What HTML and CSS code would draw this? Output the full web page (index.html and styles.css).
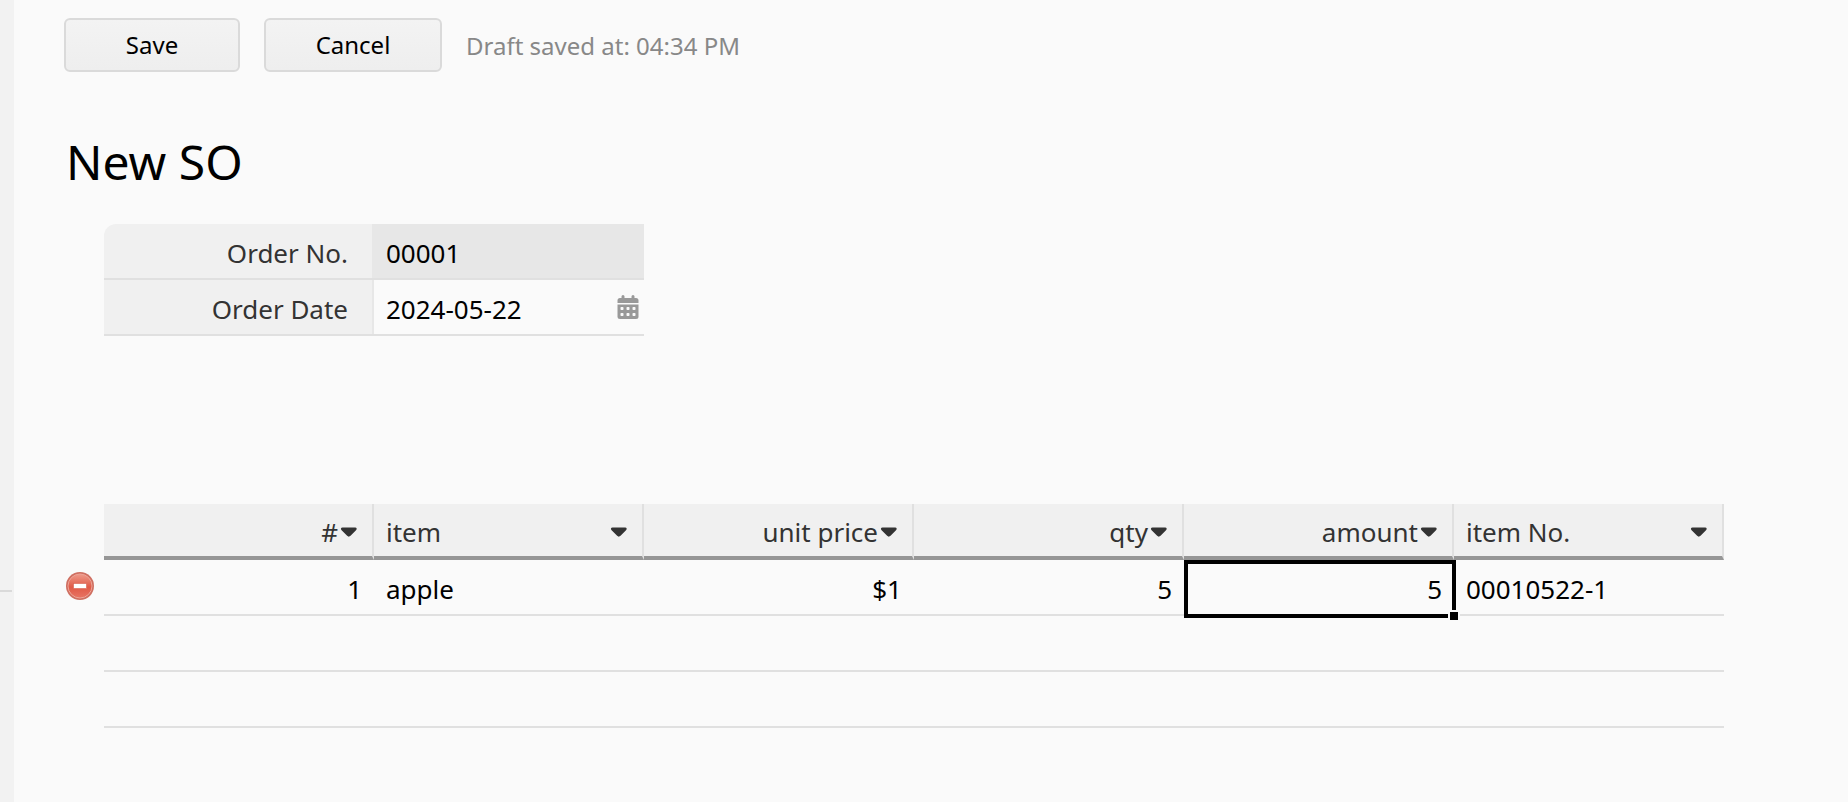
FILE: index.html
```html
<!DOCTYPE html>
<html lang="en">
<head>
    <meta charset="UTF-8">
    <meta name="viewport" content="width=device-width, initial-scale=1.0">
    <title>New SO</title>
    <link rel="stylesheet" href="styles.css">
</head>
<body>
    <svg class="sprite" aria-hidden="true">
        <symbol id="caret" viewBox="0 0 18 12">
            <path d="M2.5 1.500h12.6c1.700 0 2.200 1.600.9 2.700l-5.500 5.600c-1.200 1.100-2.200 1.100-3.400 0L1.600 4.200C.4 3.100.8 1.500 2.500 1.500z"/>
        </symbol>
    </svg>

    <div class="sidebar"></div>

    <main class="page">
        <div class="toolbar">
            <button type="button" class="btn btn-save">Save</button>
            <button type="button" class="btn btn-cancel">Cancel</button>
            <span class="draft-status">Draft saved at: 04:34 PM</span>
        </div>

        <h1>New SO</h1>

        <form class="order-form">
            <div class="form-row">
                <label for="order-no">Order No.</label>
                <div class="field readonly">
                    <input type="text" id="order-no" value="00001" readonly>
                </div>
            </div>
            <div class="form-row">
                <label for="order-date">Order Date</label>
                <div class="field">
                    <input type="text" id="order-date" value="2024-05-22">
                    <button type="button" class="date-btn" aria-label="Pick a date">
                        <svg viewBox="0 0 22 24" width="22" height="24">
                            <path fill="#999" d="M4.500 1.500a1.500 1.500 0 0 1 3 0V3h7V1.500a1.500 1.500 0 0 1 3 0V3H19a2.500 2.500 0 0 1 2.500 2.500V8h-21V5.500A2.500 2.500 0 0 1 3 3h1.500z"/>
                            <path fill="#999" d="M.5 9.500h21v12A2.500 2.500 0 0 1 19 24H3a2.500 2.500 0 0 1-2.500-2.500z"/>
                            <g fill="#fafafa">
                                <rect x="3.500" y="12" width="3" height="3" rx=".8"/>
                                <rect x="9.500" y="12" width="3" height="3" rx=".8"/>
                                <rect x="15.500" y="12" width="3" height="3" rx=".8"/>
                                <rect x="3.500" y="18" width="3" height="3" rx=".8"/>
                                <rect x="9.500" y="18" width="3" height="3" rx=".8"/>
                                <rect x="15.500" y="18" width="3" height="3" rx=".8"/>
                            </g>
                        </svg>
                    </button>
                </div>
            </div>
        </form>

        <div class="line-items">
            <div class="row-actions">
                <button type="button" class="remove-btn" aria-label="Remove row">
                    <svg viewBox="0 0 30 30" width="30" height="30">
                        <defs>
                            <linearGradient id="remove-fill" x1="0" y1="0" x2="0" y2="1">
                                <stop offset="0" stop-color="#ee9a8a"/>
                                <stop offset=".55" stop-color="#e05a47"/>
                                <stop offset="1" stop-color="#e87464"/>
                            </linearGradient>
                        </defs>
                        <circle cx="15" cy="15" r="14" fill="#cf6f61"/>
                        <circle cx="15" cy="15" r="12" fill="url(#remove-fill)" stroke="#eda396"/>
                        <rect x="8.500" y="12.500" width="13" height="5" fill="#fff" stroke="#d9604f" stroke-width=".6"/>
                    </svg>
                </button>
            </div>
            <table class="items">
                <thead>
                    <tr>
                        <th class="num"><div class="head"><span>#</span><button type="button" aria-label="# menu"><svg width="18" height="12"><use href="#caret"/></svg></button></div></th>
                        <th><div class="head"><span>item</span><button type="button" aria-label="item menu"><svg width="18" height="12"><use href="#caret"/></svg></button></div></th>
                        <th class="num"><div class="head"><span>unit price</span><button type="button" aria-label="unit price menu"><svg width="18" height="12"><use href="#caret"/></svg></button></div></th>
                        <th class="num"><div class="head"><span>qty</span><button type="button" aria-label="qty menu"><svg width="18" height="12"><use href="#caret"/></svg></button></div></th>
                        <th class="num"><div class="head"><span>amount</span><button type="button" aria-label="amount menu"><svg width="18" height="12"><use href="#caret"/></svg></button></div></th>
                        <th><div class="head"><span>item No.</span><button type="button" aria-label="item No. menu"><svg width="18" height="12"><use href="#caret"/></svg></button></div></th>
                    </tr>
                </thead>
                <tbody>
                    <tr>
                        <td class="num">1</td>
                        <td>apple</td>
                        <td class="num">$1</td>
                        <td class="num">5</td>
                        <td class="num selected">5</td>
                        <td>00010522-1</td>
                    </tr>
                    <tr><td colspan="6"></td></tr>
                    <tr><td colspan="6"></td></tr>
                </tbody>
            </table>
        </div>
    </main>
</body>
</html>
```
FILE: styles.css
```css
:root {
    --bg: #fafafa;
    --head-bg: #f0f0f0;
    --line: #e0e0e0;
    --label: #333;
}

*,
*::before,
*::after {
    margin: 0;
    padding: 0;
    box-sizing: border-box;
}

body {
    display: flex;
    min-height: 100vh;
    background: var(--bg);
    color: #000;
    font-family: 'Noto Sans', 'Open Sans', sans-serif;
    font-size: 26px;
    line-height: 36px;
}

button,
input {
    font: inherit;
    color: inherit;
    border: none;
    background: none;
}

button {
    cursor: pointer;
}

svg {
    display: block;
}

.sprite {
    display: none;
}

.sidebar {
    flex: 0 0 14px;
    background: #f2f2f2;
    padding-top: 590px;
}

.sidebar::before {
    content: '';
    display: block;
    width: 12px;
    height: 2px;
    background: #dadada;
}

.page {
    flex: 1;
    min-width: 0;
    padding: 18px 124px 24px 50px;
}

.toolbar {
    display: flex;
    align-items: center;
    gap: 24px;
    font-size: 24px;
}

.btn {
    height: 54px;
    border: 2px solid #dadada;
    border-radius: 6px;
    background: linear-gradient(#f3f3f3, #eee);
}

.btn-save {
    width: 176px;
}

.btn-cancel {
    width: 178px;
}

.draft-status {
    padding-top: 2px;
    color: #888;
}

h1 {
    margin-top: 56px;
    padding-left: 2px;
    font-size: 48px;
    font-weight: 400;
    line-height: 68px;
}

.order-form {
    max-width: 540px;
    margin: 28px 0 0 40px;
    border-top-left-radius: 12px;
    overflow: hidden;
}

.form-row {
    display: grid;
    grid-template-columns: repeat(2, minmax(0, 1fr));
    height: 56px;
    border-bottom: 2px solid var(--line);
}

.form-row label {
    padding: 11px 24px 0 0;
    border-right: 2px solid #e7e7e7;
    background: var(--head-bg);
    color: var(--label);
    text-align: right;
}

.field {
    display: flex;
    align-items: center;
    padding-right: 5px;
}

.field input {
    flex: 1;
    min-width: 0;
    height: 54px;
    padding: 4px 0 0 12px;
    outline: none;
}

.readonly {
    background: #e7e7e7;
}

.line-items {
    display: flex;
    margin-top: 168px;
}

.row-actions {
    flex: 0 0 40px;
    padding-top: 67px;
}

.remove-btn {
    display: block;
    margin-left: 1px;
}

.items {
    width: 100%;
    table-layout: fixed;
    border-collapse: separate;
    border-spacing: 0;
}

.items th {
    height: 56px;
    padding: 0 14px 0 12px;
    border-right: 2px solid var(--line);
    border-bottom: 4px solid #969696;
    background: var(--head-bg);
    color: var(--label);
    font-weight: 400;
}

.head {
    display: flex;
    align-items: center;
    justify-content: space-between;
    padding-top: 4px;
}

.head svg {
    fill: var(--label);
}

.num .head {
    justify-content: flex-end;
    gap: 2px;
}

.items td {
    position: relative;
    height: 56px;
    padding: 4px 12px 0;
    border-bottom: 2px solid var(--line);
}

.items .num {
    text-align: right;
}

/* active cell frame and its drag handle */
.selected::before {
    content: '';
    position: absolute;
    inset: 0 -2px -4px 0;
    border: 4px solid #000;
    z-index: 1;
}

.selected::after {
    content: '';
    position: absolute;
    right: -6px;
    bottom: -8px;
    width: 12px;
    height: 12px;
    border: 2px solid var(--bg);
    background: #000;
    z-index: 2;
}
```
